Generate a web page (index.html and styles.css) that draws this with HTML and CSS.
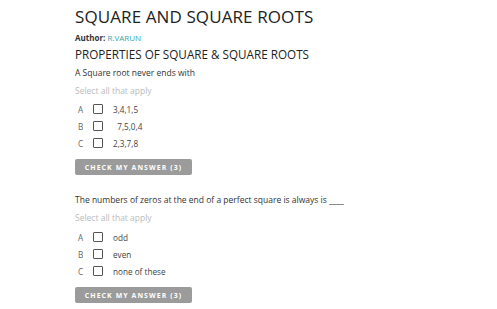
FILE: index.html
```html
<!DOCTYPE html>
<html>
<head>
<meta charset="utf-8">
<link rel="stylesheet" href="styles.css">
</head>
<body>
<div class="page">
  <h1 class="title">SQUARE AND SQUARE ROOTS</h1>
  <div class="author">Author: <span class="name">R.VARUN</span></div>
  <h2 class="subtitle">PROPERTIES OF SQUARE &amp; SQUARE ROOTS</h2>

  <div class="question">
    <div class="qtext">A Square root never ends with</div>
    <div class="hint">Select all that apply</div>
    <div class="options">
      <div class="opt"><span class="letter">A</span><span class="box"></span><span class="label">3,4,1,5</span></div>
      <div class="opt"><span class="letter">B</span><span class="box"></span><span class="label">&nbsp; 7,5,0,4</span></div>
      <div class="opt"><span class="letter">C</span><span class="box"></span><span class="label">2,3,7,8</span></div>
    </div>
    <div class="btn">CHECK MY ANSWER (3)</div>
  </div>

  <div class="question q2">
    <div class="qtext">The numbers of zeros at the end of a perfect square is always is ____</div>
    <div class="hint">Select all that apply</div>
    <div class="options">
      <div class="opt"><span class="letter">A</span><span class="box"></span><span class="label">odd</span></div>
      <div class="opt"><span class="letter">B</span><span class="box"></span><span class="label">even</span></div>
      <div class="opt"><span class="letter">C</span><span class="box"></span><span class="label">none of these</span></div>
    </div>
    <div class="btn">CHECK MY ANSWER (3)</div>
  </div>
</div>
</body>
</html>
```
FILE: styles.css
```css
html, body {
  margin: 0;
  padding: 0;
  background: #fff;
}
body {
  font-family: "Open Sans", "Liberation Sans", sans-serif;
  color: #333;
}
.page {
  padding: 6px 0 0 75px;
  display: flex;
  flex-direction: column;
}
.title {
  margin: 0;
  font-size: 17px;
  font-weight: 400;
  line-height: 22px;
  color: #222;
  letter-spacing: 0.1px;
}
.author {
  margin-top: 5px;
  font-size: 8px;
  font-weight: 700;
  color: #333;
  line-height: 10px;
}
.author .name {
  color: #3aa6a0;
  font-weight: 400;
}
.subtitle {
  margin: 3px 0 0;
  font-size: 11.7px;
  font-weight: 400;
  line-height: 16px;
  color: #222;
}
.question {
  display: flex;
  flex-direction: column;
  align-items: flex-start;
}
.qtext {
  margin-top: 5px;
  font-size: 8.5px;
  line-height: 12px;
  color: #333;
}
.hint {
  margin-top: 6px;
  font-size: 8.5px;
  line-height: 12px;
  color: #bbb;
}
.options {
  margin-top: 6px;
  display: flex;
  flex-direction: column;
  gap: 5px;
}
.q2 .options {
  margin-top: 7px;
}
.opt {
  display: flex;
  align-items: center;
  height: 12px;
  font-size: 8.2px;
  color: #444;
}
.letter {
  width: 18px;
  padding-left: 3px;
  box-sizing: border-box;
  font-size: 8.2px;
  color: #666;
}
.box {
  width: 8px;
  height: 8px;
  border: 1.2px solid #555;
  border-radius: 1px;
  margin-right: 10px;
}
.label {
  white-space: pre;
}
.btn {
  margin-top: 10px;
  width: 117px;
  height: 16px;
  background: #9b9b9b;
  border-radius: 2px;
  color: #fff;
  font-size: 6.9px;
  font-weight: 700;
  letter-spacing: 1.1px;
  display: flex;
  align-items: center;
  justify-content: center;
  box-sizing: border-box;
}
.q2 {
  margin-top: 14px;
}
```
